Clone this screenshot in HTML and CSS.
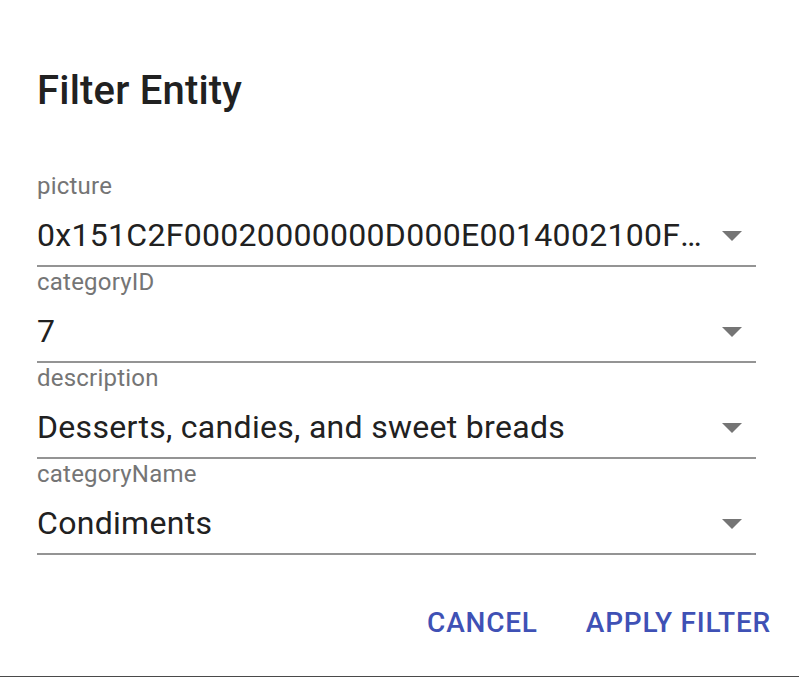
FILE: index.html
```html
<!DOCTYPE html>
<html lang="en">
<head>
<meta charset="utf-8">
<title>Filter Entity</title>
<link rel="stylesheet" href="styles.css">
</head>
<body>
<div class="dialog">
  <h2 class="title">Filter Entity</h2>
  <div class="content">
    <div class="field">
      <label class="label">picture</label>
      <div class="select">
        <div class="value">0x151C2F00020000000D000E0014002100FFFFFFFF4269746D617020496D616765005061696E742E5069637475726500010500000200000007000000504272757368000000000000000000A0290000424D98290000000000005600000028000000AC00000078000000010004000000000000000000880B0000880B00000800</div>
        <svg class="arrow" viewBox="0 0 24 24" width="48" height="48" aria-hidden="true"><path d="M7 10l5 5 5-5z"/></svg>
      </div>
    </div>
    <div class="field">
      <label class="label">categoryID</label>
      <div class="select">
        <div class="value">7</div>
        <svg class="arrow" viewBox="0 0 24 24" width="48" height="48" aria-hidden="true"><path d="M7 10l5 5 5-5z"/></svg>
      </div>
    </div>
    <div class="field">
      <label class="label">description</label>
      <div class="select">
        <div class="value">Desserts, candies, and sweet breads</div>
        <svg class="arrow" viewBox="0 0 24 24" width="48" height="48" aria-hidden="true"><path d="M7 10l5 5 5-5z"/></svg>
      </div>
    </div>
    <div class="field">
      <label class="label">categoryName</label>
      <div class="select">
        <div class="value">Condiments</div>
        <svg class="arrow" viewBox="0 0 24 24" width="48" height="48" aria-hidden="true"><path d="M7 10l5 5 5-5z"/></svg>
      </div>
    </div>
  </div>
  <div class="actions">
    <button class="btn">Cancel</button>
    <button class="btn">Apply Filter</button>
  </div>
</div>
<div class="backdrop-edge"></div>
</body>
</html>
```
FILE: styles.css
```css
html, body {
  margin: 0;
  padding: 0;
  background: #ffffff;
}
body {
  height: 677px;
  overflow: hidden;
  font-family: Roboto, "Liberation Sans", Arial, sans-serif;
  color: #212121;
}
.dialog {
  height: 676px;
  display: flex;
  flex-direction: column;
  background: #ffffff;
}
.title {
  margin: 0;
  padding: 59px 43px 0 37px;
  font-size: 40px;
  font-weight: 500;
  line-height: 64px;
  letter-spacing: 0.2px;
  color: #212121;
}
.content {
  padding: 48px 43px 16px 37px;
  display: flex;
  flex-direction: column;
}
.field {
  display: flex;
  flex-direction: column;
  height: 96px;
}
.label {
  display: block;
  font-size: 24px;
  line-height: 30px;
  height: 30px;
  letter-spacing: 0.22px;
  color: #757575;
}
.select {
  display: flex;
  align-items: center;
  height: 64px;
  border-bottom: 2px solid #949494;
}
.value {
  flex: 1 1 auto;
  min-width: 0;
  font-size: 32px;
  line-height: 38px;
  letter-spacing: 0.3px;
  padding: 15px 0 11px;
  white-space: nowrap;
  overflow: hidden;
  text-overflow: ellipsis;
  color: #212121;
}
.arrow {
  flex: none;
  margin-left: 6px;
  margin-top: 4px;
  fill: #757575;
}
.actions {
  display: flex;
  justify-content: flex-end;
  gap: 16px;
  padding: 16px 12px 16px 16px;
}
.btn {
  font-family: Roboto, "Liberation Sans", Arial, sans-serif;
  font-size: 28px;
  font-weight: 500;
  line-height: 48px;
  letter-spacing: 0.8px;
  text-transform: uppercase;
  color: #3f51b5;
  background: transparent;
  border: 0;
  padding: 12px 16px;
  margin: 0;
  border-radius: 8px;
  cursor: pointer;
}
.backdrop-edge {
  height: 1px;
  background: #4a4a4a;
}
```
